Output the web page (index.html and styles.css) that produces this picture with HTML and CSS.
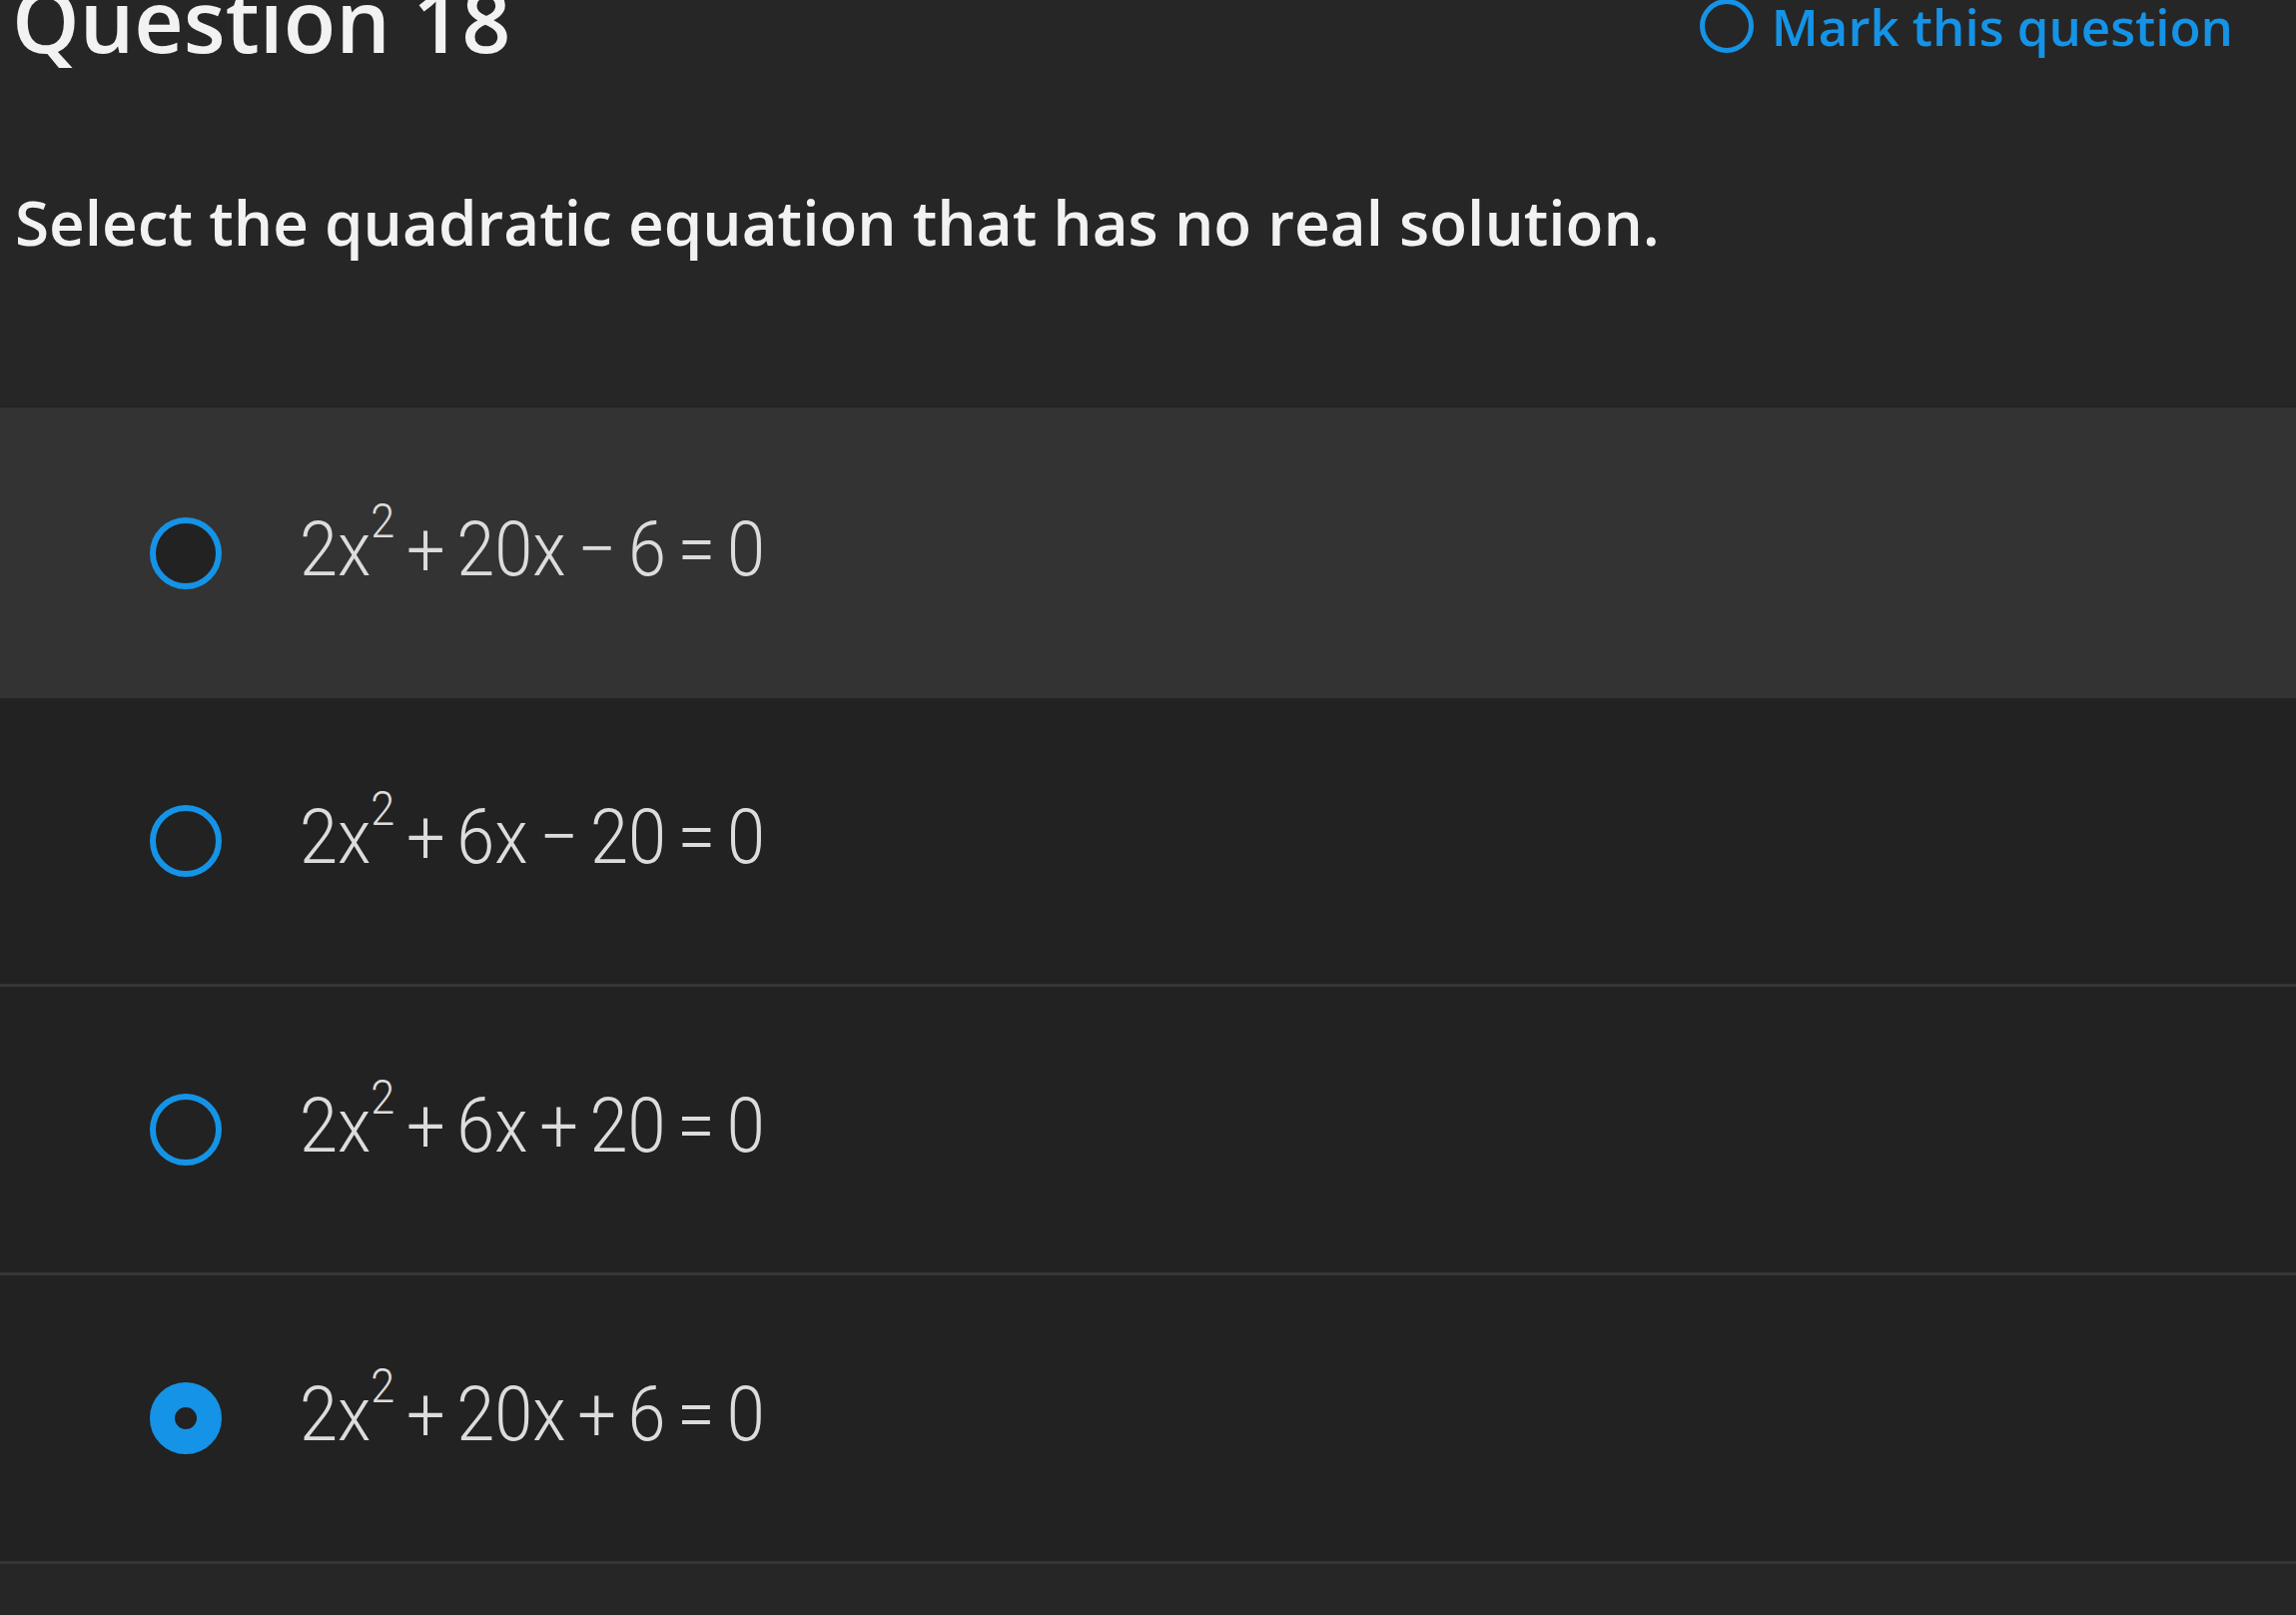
FILE: index.html
```html
<!DOCTYPE html>
<html>
  <head>
    <link rel="stylesheet" href="styles.css">
  </head>
  <body>
    <div class="header">
      <div class="title">Question 18</div>
      <div class="mark">
        <span class="mark-ring"></span>
        <span class="mark-label">Mark this question</span>
      </div>
    </div>

    <div class="prompt">Select the quadratic equation that has no real solution.</div>

    <ul class="options">
      <li class="option option_hover">
        <span class="radio"></span>
        <span class="math">2x<sup>2</sup><span class="op">+</span>20x<span class="op">&minus;</span>6<span class="op">=</span>0</span>
      </li>
      <li class="option">
        <span class="radio"></span>
        <span class="math">2x<sup>2</sup><span class="op">+</span>6x<span class="op">&minus;</span>20<span class="op">=</span>0</span>
      </li>
      <li class="option">
        <span class="radio"></span>
        <span class="math">2x<sup>2</sup><span class="op">+</span>6x<span class="op">+</span>20<span class="op">=</span>0</span>
      </li>
      <li class="option">
        <span class="radio radio_checked"></span>
        <span class="math">2x<sup>2</sup><span class="op">+</span>20x<span class="op">+</span>6<span class="op">=</span>0</span>
      </li>
    </ul>
  </body>
</html>
```

FILE: styles.css
```css
:root {
  background: #262626;
}

body {
  margin: 0;
  font-family: "Open Sans", Lato, sans-serif;
  font-variant-ligatures: none;
  color: #f2f2f2;
}

.header {
  display: flex;
  justify-content: space-between;
  align-items: flex-start;
  padding: 0 63px 0 12px;
}

.title {
  font-size: 86px;
  font-weight: 600;
  line-height: 72px;
  margin-top: -16px;
}

.mark {
  display: flex;
  align-items: center;
  gap: 18px;
  color: #1593e6;
  margin-top: -6px;
}

.mark-ring {
  width: 44px;
  height: 44px;
  border: 5px solid #1593e6;
  border-radius: 50%;
}

.mark-label {
  font-size: 51px;
  font-weight: 600;
  line-height: 64px;
}

.prompt {
  font-size: 62px;
  font-weight: 600;
  line-height: 80px;
  padding: 0 15px;
  margin-top: 124px;
}

.options {
  list-style: none;
  margin: 144px 0 0;
  padding: 0;
}

.option {
  height: 286px;
  display: flex;
  align-items: center;
  gap: 78px;
  padding-left: 150px;
  background: #222222;
  border-bottom: 3px solid #363636;
}

.option_hover {
  background: #333333;
  border-top: 2px solid #222222;
  border-bottom: none;
  height: 291px;
}

.radio {
  width: 60px;
  height: 60px;
  border: 6px solid #1593e6;
  border-radius: 50%;
  background: #222222;
  flex-shrink: 0;
}

.radio_checked {
  width: 22px;
  height: 22px;
  border-width: 25px;
}

.math {
  display: inline-block;
  font-family: Roboto, sans-serif;
  font-weight: 300;
  font-size: 76px;
  color: #dcdcdc;
  margin-top: -8px;
  transform: scaleX(0.9);
  transform-origin: left center;
  white-space: nowrap;
}

.math sup {
  font-size: 48px;
  vertical-align: 38px;
  line-height: 0;
}

.op {
  margin: 0 13px;
}
```
